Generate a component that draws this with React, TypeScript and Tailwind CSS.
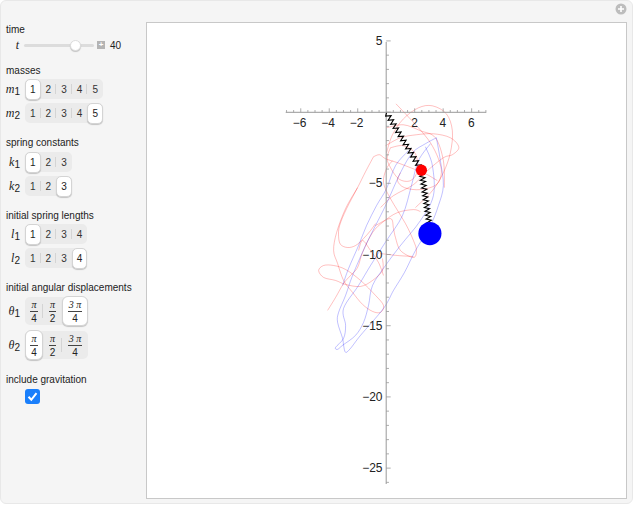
import { ReactNode } from "react";

type Pt = [number, number];

// screen-space traces of the two masses
const redTraces: Pt[][] = [
  [[395.5, 103], [405, 113], [418, 127], [430, 142], [438, 158], [441, 172], [436, 184], [420, 189], [404, 187], [397, 180], [400, 172]],
  [[386, 152], [392, 134], [403, 118], [418, 107], [432, 105], [446, 113], [452, 130], [450, 152], [443, 172], [432, 190], [415, 207]],
  [[386, 127], [403, 124], [420, 130], [435, 137], [443, 160], [444, 187]],
  [[385, 145], [400, 137], [416, 134], [433, 133], [450, 137], [458.5, 146.5], [452, 154], [443, 157], [427, 170], [413, 184], [393, 195], [380, 207]],
  [[390, 147], [387, 155], [388, 163], [398, 178], [410, 180], [417, 170], [415, 153], [403, 145], [390, 147]],
  [[373, 156], [379, 154], [385, 158], [397, 162], [410, 167], [425, 173], [437, 180]],
  [[373, 156], [365, 171], [357, 187], [346, 208], [339, 225], [338, 236], [340, 244], [347, 247], [355, 245], [363, 238], [370, 230], [375, 223]],
  [[357, 187], [345, 208], [336, 232], [333, 250], [337, 263], [343, 280], [352, 292], [362, 304], [372, 311], [380, 312], [383, 305], [375, 295], [360, 280], [345, 269], [333, 265], [323, 265], [318, 270], [323, 277], [335, 280], [345, 284], [360, 286], [372, 280], [382, 270], [382, 258]],
  [[327, 310], [335, 297], [343, 283], [350, 275], [357, 267], [362, 252], [372, 232], [383, 221], [397, 212], [413, 209], [420, 211]],
  [[375, 225], [390, 218], [393, 228], [395, 237], [400, 250], [413, 257], [416, 250], [413, 240], [405, 223], [390, 198], [383, 182], [386, 168], [392, 160]],
  [[380, 253], [397, 255], [413, 256]],
  [[358, 250], [362, 240], [370, 250], [378, 262], [383, 275]],
];

const blueTraces: Pt[][] = [
  [[436, 137], [440, 160], [443, 185], [438, 205], [430, 225], [415, 250], [404, 272], [393, 290], [383, 308], [360, 335], [350, 348], [345, 352], [343, 345], [342, 338], [337, 322], [338, 312], [345, 295], [352, 275], [365, 245], [375, 225], [386, 203], [400, 172], [412, 152], [425, 143], [436, 137]],
  [[430, 143], [418, 160], [411, 185], [402, 215], [386, 240], [370, 265], [358, 285], [343, 308], [345, 325], [343, 338], [335, 347], [337, 349], [342, 345], [355, 335], [363, 322], [368, 305], [372, 285], [385, 265], [400, 245], [420, 220], [433, 195], [432, 165], [425, 146]],
  [[408, 150], [395, 165], [386, 188], [376, 205], [366, 225], [358, 245], [348, 268], [342, 285]],
];

// catmull-rom through the traced points
const smooth = (p: Pt[]) => {
  let d = `M${p[0][0]} ${p[0][1]}`;
  for (let i = 0; i < p.length - 1; i++) {
    const a = p[Math.max(0, i - 1)];
    const b = p[i];
    const c = p[i + 1];
    const e = p[Math.min(p.length - 1, i + 2)];
    d += `C${b[0] + (c[0] - a[0]) / 6} ${b[1] + (c[1] - a[1]) / 6} ${c[0] - (e[0] - b[0]) / 6} ${c[1] - (e[1] - b[1]) / 6} ${c[0]} ${c[1]}`;
  }
  return d;
};

const zigzag = (from: Pt, to: Pt, n: number, amp: number) => {
  const dx = to[0] - from[0];
  const dy = to[1] - from[1];
  const len = Math.hypot(dx, dy);
  const pts: string[] = [`${from[0]},${from[1]}`];
  for (let i = 1; i < n; i++) {
    const t = i / n;
    const s = i % 2 ? amp : -amp;
    pts.push(`${from[0] + dx * t + (-dy / len) * s},${from[1] + dy * t + (dx / len) * s}`);
  }
  pts.push(`${to[0]},${to[1]}`);
  return pts.join(" ");
};

const X0 = 386;
const Y0 = 112;
const U = 14.27;

const Plot = () => {
  const xTicks: number[] = [];
  for (let v = -7; v <= 7; v += 0.5) xTicks.push(v);
  const yTicks: number[] = [];
  for (let v = 5; v >= -26; v -= 1) yTicks.push(v);
  return (
    <svg viewBox="146 22 480 476" className="block w-full h-full font-['Liberation_Sans',sans-serif]">
      {redTraces.map((t, i) => (
        <path key={i} d={smooth(t)} fill="none" stroke="#ff0000" strokeOpacity={0.25} strokeWidth={1} />
      ))}
      {blueTraces.map((t, i) => (
        <path key={i} d={smooth(t)} fill="none" stroke="#0000ff" strokeOpacity={0.25} strokeWidth={1} />
      ))}
      <line x1={285} x2={486} y1={Y0 - 0.5} y2={Y0 - 0.5} stroke="#999" />
      <line x1={385.7} x2={385.7} y1={41} y2={484} stroke="#999" />
      {xTicks.map((v) => {
        const x = X0 + v * U - 0.3;
        if (x < 285 || x > 486 || v === 0) return null;
        return <line key={v} x1={x} x2={x} y1={Y0 - 0.5} y2={Y0 - (v % 2 === 0 ? 4.5 : 2.8)} stroke="#999" strokeWidth={0.8} />;
      })}
      {yTicks.map((v) => {
        const y = Y0 - 0.7 - v * U;
        if (y > 485) return null;
        return <line key={v} x1={385.7} x2={385.7 + (v % 5 === 0 ? 4.5 : 2.8)} y1={y} y2={y} stroke="#999" strokeWidth={0.8} />;
      })}
      {[-6, -4, -2, 2, 4, 6].map((v) => (
        <text key={v} x={X0 + v * U - (v < 0 ? 1.5 : 0.5)} y={126} textAnchor="middle" fontSize={12} fill="#222">
          {v < 0 ? `−${-v}` : v}
        </text>
      ))}
      {[5, -5, -10, -15, -20, -25].map((v) => (
        <text key={v} x={382} y={Y0 - v * U + 3.4} textAnchor="end" fontSize={12} fill="#222">
          {v < 0 ? `−${-v}` : v}
        </text>
      ))}
      <polyline points={zigzag([386, 112], [421, 169.5], 28, 2.5)} fill="none" stroke="#000" strokeWidth={1.1} />
      <polyline points={zigzag([421, 169.5], [429, 224], 28, 2.5)} fill="none" stroke="#000" strokeWidth={1.1} />
      <circle cx={421} cy={169.5} r={5.6} fill="#ff0000" />
      <circle cx={429.5} cy={233} r={11.6} fill="#0000ff" />
    </svg>
  );
};

const SectionTitle = ({ children, className }: { children: ReactNode; className: string }) => (
  <div className={`pl-[5px] text-[10px] leading-[12px] text-[#222] ${className}`}>{children}</div>
);

const RowLabel = ({ name, sub }: { name: string; sub: string }) => (
  <div className="w-[24px] pr-[5px] shrink-0 text-right text-[12px] leading-none text-[#222] font-['Liberation_Serif',serif]">
    <i>{name}</i>
    <span className="relative top-[2px] text-[10px] font-['Liberation_Sans',sans-serif]">{sub}</span>
  </div>
);

const Bar = ({ n, selected }: { n: number; selected: number }) => (
  <div className="flex h-[20px] items-center rounded-[5px] bg-[#ebebeb]">
    {Array.from({ length: n }, (_, i) => i + 1).map((v) => (
      <div
        key={v}
        className={
          v === selected
            ? "flex h-[21px] w-[15.6px] items-center justify-center rounded-[5px] border border-[#d4d4d4] bg-white text-[10px] text-[#222] shadow-[0_1px_1px_rgba(0,0,0,0.2)]"
            : v === n || v + 1 === selected
              ? "flex h-[20px] w-[15.6px] items-center justify-center text-[10px] text-[#333]"
              : "flex h-[20px] w-[15.6px] items-center justify-center text-[10px] text-[#333] [background:linear-gradient(#d4d4d4,#d4d4d4)_right_center/1px_10px_no-repeat]"
        }
      >
        {v}
      </div>
    ))}
  </div>
);

const Row = ({ name, sub, n, selected, className }: { name: string; sub: string; n: number; selected: number; className: string }) => (
  <div className={`flex items-center ${className}`}>
    <RowLabel name={name} sub={sub} />
    <Bar n={n} selected={selected} />
  </div>
);

const Frac = ({ top, bottom }: { top: string; bottom: string }) => (
  <div className="flex flex-col items-center text-[10px] leading-[11px] text-[#222]">
    <span className="px-[1px] border-b border-[#444] pb-[1px] font-['Liberation_Serif',serif] italic whitespace-pre">{top}</span>
    <span className="pt-[1px]">{bottom}</span>
  </div>
);

const angleItems = [
  { top: "π", bottom: "4", w: "w-[18px]" },
  { top: "π", bottom: "2", w: "w-[19px]" },
  { top: "3 π", bottom: "4", w: "w-[26px]" },
];

const AngleRow = ({ sub, selected, className }: { sub: string; selected: number; className: string }) => (
  <div className={`flex items-center ${className}`}>
    <RowLabel name="θ" sub={sub} />
    <div className="flex h-[28px] items-center rounded-[5px] bg-[#ebebeb]">
      {angleItems.map((a, i) => (
        <div
          key={i}
          className={
            i === selected
              ? `flex h-[30px] ${a.w} items-center justify-center rounded-[6px] border border-[#d4d4d4] bg-white shadow-[0_1px_1px_rgba(0,0,0,0.2)]`
              : i === 2 || i + 1 === selected
                ? `flex h-[28px] ${a.w} items-center justify-center`
                : `flex h-[28px] ${a.w} items-center justify-center [background:linear-gradient(#d4d4d4,#d4d4d4)_right_center/1px_14px_no-repeat]`
          }
        >
          <Frac top={a.top} bottom={a.bottom} />
        </div>
      ))}
    </div>
  </div>
);

export default function App() {
  return (
    <div className="h-[506px] w-[633px] bg-white font-['Liberation_Sans',sans-serif]">
      <div className="flex h-[504px] w-[633px] rounded-[6px] border border-[#e8e8e8] bg-[#f5f5f5]">
        <div className="w-[145px] shrink-0">
          <SectionTitle className="mt-[23px]">time</SectionTitle>
          <div className="mt-[2px] flex h-[14px] items-center">
            <div className="w-[23px] shrink-0 pr-[5px] text-right text-[12px] italic text-[#222] font-['Liberation_Serif',serif]">t</div>
            <div className="relative h-[3px] w-[70px] rounded-full bg-[#dcdcdc]">
              <div className="absolute left-[46px] top-[-4px] h-[11px] w-[11px] rounded-full border border-[#ddd] bg-white shadow-[0_1px_1px_rgba(0,0,0,0.2)]" />
            </div>
            <div className="ml-[3px] flex h-[8px] w-[8px] items-center justify-center bg-[#b4b4b4] text-[8px] leading-none font-bold text-white">+</div>
            <div className="ml-[5px] text-[10px] text-[#222]">40</div>
          </div>
          <SectionTitle className="mt-[13px]">masses</SectionTitle>
          <Row name="m" sub="1" n={5} selected={1} className="mt-[2px]" />
          <Row name="m" sub="2" n={5} selected={5} className="mt-[4px]" />
          <SectionTitle className="mt-[14px]">spring constants</SectionTitle>
          <Row name="k" sub="1" n={3} selected={1} className="mt-[3px]" />
          <Row name="k" sub="2" n={3} selected={3} className="mt-[4px]" />
          <SectionTitle className="mt-[14px]">initial spring lengths</SectionTitle>
          <Row name="l" sub="1" n={4} selected={1} className="mt-[2px]" />
          <Row name="l" sub="2" n={4} selected={4} className="mt-[4px]" />
          <SectionTitle className="mt-[14px]">initial angular displacements</SectionTitle>
          <AngleRow sub="1" selected={2} className="mt-[3px]" />
          <AngleRow sub="2" selected={0} className="mt-[6px]" />
          <SectionTitle className="mt-[15px]">include gravitation</SectionTitle>
          <div className="mt-[3px] ml-[24px] flex h-[15px] w-[15px] items-center justify-center rounded-[3px] bg-[#1a7ffb]">
            <svg viewBox="0 0 15 15" className="h-[15px] w-[15px]">
              <path d="M3.5 7.8 6.3 10.8 11.5 4.2" fill="none" stroke="#fff" strokeWidth={2} />
            </svg>
          </div>
        </div>
        <div className="flex flex-col w-[481px] shrink-0">
          <div className="flex h-[21px] shrink-0 items-center justify-end">
            <svg viewBox="0 0 12 12" className="mt-[-6px] h-[12px] w-[12px]">
              <circle cx={6} cy={6} r={5.5} fill="#bdbdbd" />
              <path d="M6 3v6M3 6h6" stroke="#fff" strokeWidth={1.6} />
            </svg>
          </div>
          <div className="h-[477px] w-[481px] border border-[#c8c8c8] bg-white">
            <Plot />
          </div>
        </div>
      </div>
    </div>
  );
}
